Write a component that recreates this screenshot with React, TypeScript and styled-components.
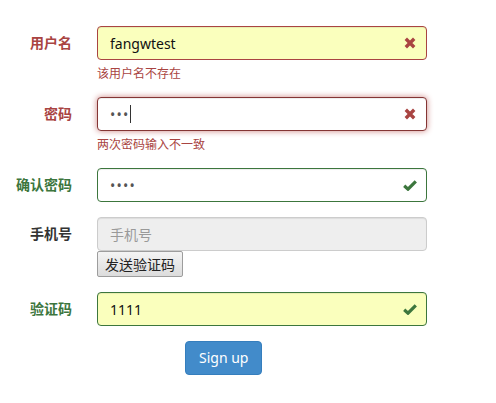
import styled, { createGlobalStyle, css } from "styled-components";

type FieldState = "error" | "success" | "default";

const colors = {
  error: { text: "#a94442", border: "#a94442" },
  success: { text: "#3c763d", border: "#3c763d" },
  default: { text: "#333", border: "#ccc" },
};

const GlobalStyle = createGlobalStyle`
  html, body {
    margin: 0;
    padding: 0;
    background: #fff;
  }
  body {
    font-family: "Noto Sans", "Noto Sans CJK SC", sans-serif;
    font-size: 14px;
    line-height: 1.42857;
    color: #333;
  }
`;

const RemoveIcon = () => (
  <svg width="12" height="12" viewBox="0 0 12 12">
    <path d="M1.8 1.8 L10.2 10.2 M10.2 1.8 L1.8 10.2" stroke="#a94442" strokeWidth="3.4" />
  </svg>
);

const OkIcon = () => (
  <svg width="14" height="11" viewBox="0 0 14 11">
    <path d="M1.2 5.8 L5 9.2 L12.8 1.4" fill="none" stroke="#3c763d" strokeWidth="3.2" />
  </svg>
);

const App = () => {
  return (
    <>
      <GlobalStyle />
      <Form>
        <FormGroup>
          <Label $state="error">用户名</Label>
          <Field>
            <Input $state="error" $autofill defaultValue="fangwtest" />
            <Feedback>
              <RemoveIcon />
            </Feedback>
            <Help $state="error">该用户名不存在</Help>
          </Field>
        </FormGroup>

        <FormGroup>
          <Label $state="error">密码</Label>
          <Field>
            <Input $state="error" $focus type="password" defaultValue="abc" />
            <Caret />
            <Feedback>
              <RemoveIcon />
            </Feedback>
            <Help $state="error">两次密码输入不一致</Help>
          </Field>
        </FormGroup>

        <FormGroup>
          <Label $state="success">确认密码</Label>
          <Field>
            <Input $state="success" type="password" defaultValue="abcd" />
            <Feedback>
              <OkIcon />
            </Feedback>
          </Field>
        </FormGroup>

        <FormGroup>
          <Label $state="default">手机号</Label>
          <Field>
            <Input $state="default" disabled placeholder="手机号" />
            <SendButton type="button">发送验证码</SendButton>
          </Field>
        </FormGroup>

        <FormGroup>
          <Label $state="success">验证码</Label>
          <Field>
            <Input $state="success" $autofill defaultValue="1111" />
            <Feedback>
              <OkIcon />
            </Feedback>
          </Field>
        </FormGroup>

        <Actions>
          <SubmitButton type="button">Sign up</SubmitButton>
        </Actions>
      </Form>
    </>
  );
};

export default App;

const Form = styled.form`
  padding-top: 26px;
  width: 427px;
`;

const FormGroup = styled.div`
  display: grid;
  grid-template-columns: 72px 330px;
  column-gap: 25px;
  margin-bottom: 15px;
`;

const Label = styled.label<{ $state: FieldState }>`
  text-align: right;
  font-weight: bold;
  padding-top: 7px;
  line-height: 20px;
  color: ${(p) => colors[p.$state].text};
`;

const Field = styled.div`
  position: relative;
  display: flex;
  flex-direction: column;
  align-items: flex-start;
`;

const Input = styled.input<{ $state: FieldState; $autofill?: boolean; $focus?: boolean }>`
  box-sizing: border-box;
  width: 100%;
  height: 34px;
  padding: 6px 42px 6px 12px;
  font-family: inherit;
  font-size: 14px;
  line-height: 20px;
  color: ${(p) => (p.$autofill ? "#111" : "#555")};
  background: ${(p) => (p.$autofill ? "#faffbd" : "#fff")};
  border: 1px solid ${(p) => colors[p.$state].border};
  border-radius: 4px;
  box-shadow: inset 0 1px 1px rgba(0, 0, 0, 0.075);
  outline: none;
  margin: 0;

  &[type="password"] {
    letter-spacing: 1.2px;
  }

  ${(p) =>
    p.$focus &&
    css`
      border-color: #843534;
      box-shadow: inset 0 1px 1px rgba(0, 0, 0, 0.075), 0 0 6px #ce8483;
    `}

  &:disabled {
    background: #eee;
    cursor: not-allowed;
  }

  &::placeholder {
    color: #999;
    letter-spacing: 0;
  }
`;

const Caret = styled.span`
  position: absolute;
  left: 33px;
  top: 8px;
  width: 1px;
  height: 18px;
  background: #333;
`;

const Feedback = styled.span`
  position: absolute;
  top: 0;
  right: 0;
  width: 34px;
  height: 34px;
  display: flex;
  align-items: center;
  justify-content: center;
  pointer-events: none;
`;

const Help = styled.span<{ $state: FieldState }>`
  display: block;
  margin-top: 5px;
  font-size: 12px;
  line-height: 17px;
  color: ${(p) => colors[p.$state].text};
`;

const SendButton = styled.button`
  box-sizing: border-box;
  height: 26px;
  width: 86px;
  padding: 0 5px;
  margin: 0;
  font-family: "Noto Sans CJK SC", sans-serif;
  font-size: 14px;
  line-height: 20px;
  color: #222;
  background: linear-gradient(#f4f4f4, #dcdcdc);
  border: 1px solid #9d9d9d;
  border-radius: 2px;
`;

const Actions = styled.div`
  padding-left: 185px;
`;

const SubmitButton = styled.button`
  box-sizing: border-box;
  height: 34px;
  padding: 6px 13px;
  font-family: inherit;
  font-size: 14px;
  line-height: 20px;
  color: #fff;
  background: #428bca;
  border: 1px solid #357ebd;
  border-radius: 4px;
`;
